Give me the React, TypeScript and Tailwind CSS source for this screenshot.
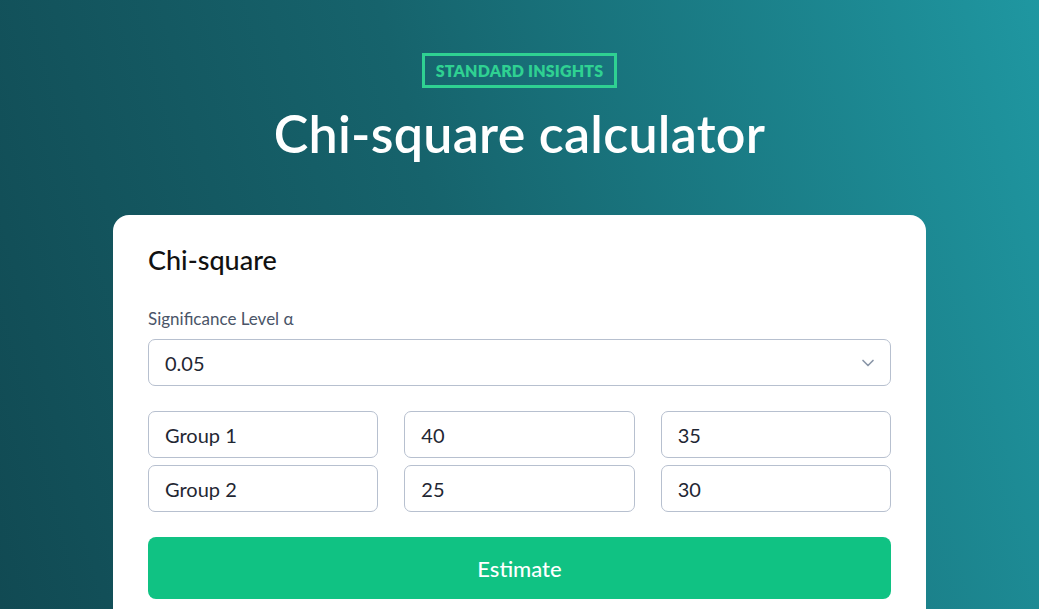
import { ChevronDown } from 'lucide-react';

const ROWS = [
  ['Group 1', '40', '35'],
  ['Group 2', '25', '30'],
];

export default function App() {
  return (
    <div className="min-h-[609px] h-[609px] overflow-hidden bg-[linear-gradient(75deg,#114a53_0%,#16636c_45%,#1f97a1_100%)] font-['Lato',sans-serif] flex flex-col items-center">
      {/* header */}
      <div className="mt-[53px] border-[3px] border-[#2fd192] px-[11px] h-[35px] flex items-center">
        <span className="text-[16px] font-extrabold tracking-[0.01em] text-[#2fd192] leading-none">STANDARD INSIGHTS</span>
      </div>
      <h1 className="mt-[14px] text-[52px] font-semibold text-white leading-[62px] tracking-[0.005em]">Chi-square calculator</h1>

      {/* card */}
      <div className="mt-[51px] w-[813px] flex-1 bg-white rounded-t-[16px] px-[35px] pt-[28px]">
        <h2 className="text-[27px] font-medium text-[#111] leading-[34px]">Chi-square</h2>

        <label className="block mt-[32px] text-[17px] text-[#4a5568] leading-[20px]">Significance Level α</label>
        <div className="mt-[10px] h-[47px] border border-[#b7c0cf] rounded-[7px] flex items-center justify-between pl-[16px] pr-[12px]">
          <span className="text-[20px] text-[#1f2733]">0.05</span>
          <ChevronDown className="w-[20px] h-[20px] text-[#8a96a8]" strokeWidth={2} />
        </div>

        <div className="mt-[25px] flex flex-col gap-[7px]">
          {ROWS.map((row) => (
            <div key={row[0]} className="grid grid-cols-3 gap-[26px]">
              {row.map((v, i) => (
                <div key={i} className="h-[47px] border border-[#b7c0cf] rounded-[7px] flex items-center px-[16px]">
                  <span className="text-[20px] text-[#1f2733]">{v}</span>
                </div>
              ))}
            </div>
          ))}
        </div>

        <button className="mt-[25px] w-full h-[62px] bg-[#10c283] rounded-[8px] text-white text-[22px] font-medium">Estimate</button>
      </div>
    </div>
  );
}
